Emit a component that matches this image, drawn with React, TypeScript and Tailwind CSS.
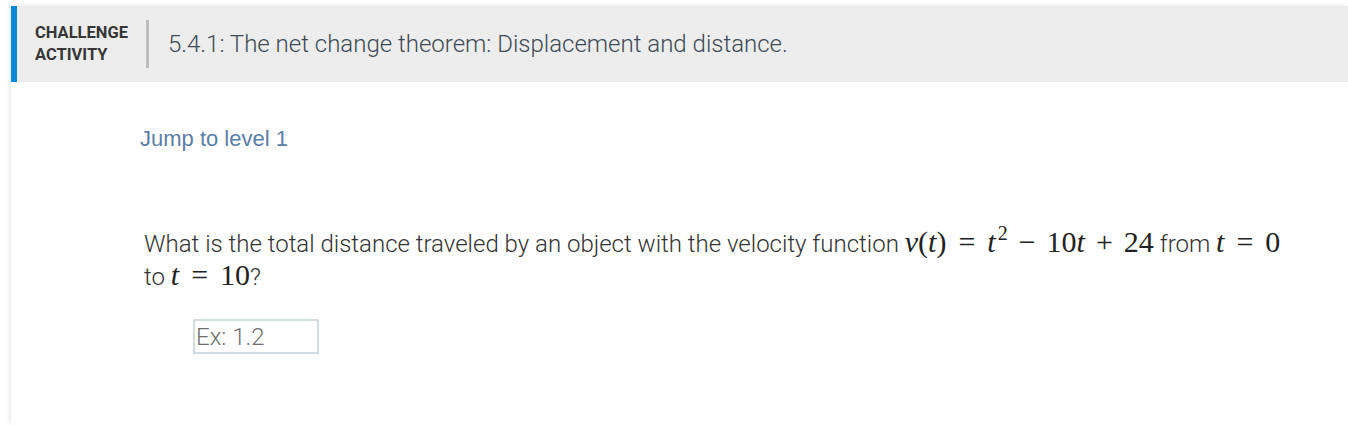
import React from 'react';

function M({ children }: { children: React.ReactNode }) {
	return (
		<span className="font-['Liberation_Serif',serif] text-[30px] leading-[20px] text-[#222]">{children}</span>
	);
}

function I({ children }: { children: React.ReactNode }) {
	return <i className="italic">{children}</i>;
}

function Rel({ children }: { children: React.ReactNode }) {
	return <span className="mx-[12px]">{children}</span>;
}

function Bin({ children }: { children: React.ReactNode }) {
	return <span className="mx-[11px]">{children}</span>;
}

export default function App() {
	return (
		<div className="min-h-[425px] bg-white pt-[6px] pl-[11px] font-['Roboto',sans-serif]">
			<div className="min-h-[419px] bg-white shadow-[-2px_-1px_4px_rgba(0,0,0,0.08)]">
				<header className="flex h-[76px] items-center bg-[#ededed] border-l-[6px] border-[#0a88d8]">
					<div className="w-[129px] pl-[18px] text-[16.5px] leading-[22px] font-bold text-[#363636]">
						CHALLENGE
						<br />
						ACTIVITY
					</div>
					<div className="w-[3px] h-[48px] bg-[#bdbdbd]" />
					<h1 className="ml-[19px] text-[24px] font-light text-[#3e4a56]">
						5.4.1: The net change theorem: Displacement and distance.
					</h1>
				</header>

				<div className="pl-[129px] pt-[44px]">
					<button className="font-['Liberation_Sans',sans-serif] text-[22px] text-[#5b7ea6] leading-[26px]">
						Jump to level 1
					</button>
				</div>

				<div className="pl-[133px] pt-[75px] pr-[45px]">
					<p className="text-[24px] font-light leading-[33px] text-[#333]">
						What is the total distance traveled by an object with the velocity function{' '}
						<M>
							<I>v</I>(<I>t</I>)<Rel>=</Rel>
							<I>t</I>
							<sup className="text-[20px] top-[-12px] ml-[2px]">2</sup>
							<Bin>−</Bin>10<I>t</I>
							<Bin>+</Bin>24
						</M>{' '}
						from{' '}
						<M>
							<I>t</I>
							<Rel>=</Rel>0
						</M>{' '}
						to{' '}
						<M>
							<I>t</I>
							<Rel>=</Rel>10
						</M>
						?
					</p>
					<div className="pl-[49px] pt-[25px]">
						<input
							type="text"
							placeholder="Ex: 1.2"
							className="w-[126px] h-[35px] border-2 border-[#d2dbe0] px-[1px] text-[24px] font-light text-[#333] placeholder-[#6f6f6f] outline-none"
						/>
					</div>
				</div>
			</div>
		</div>
	);
}
